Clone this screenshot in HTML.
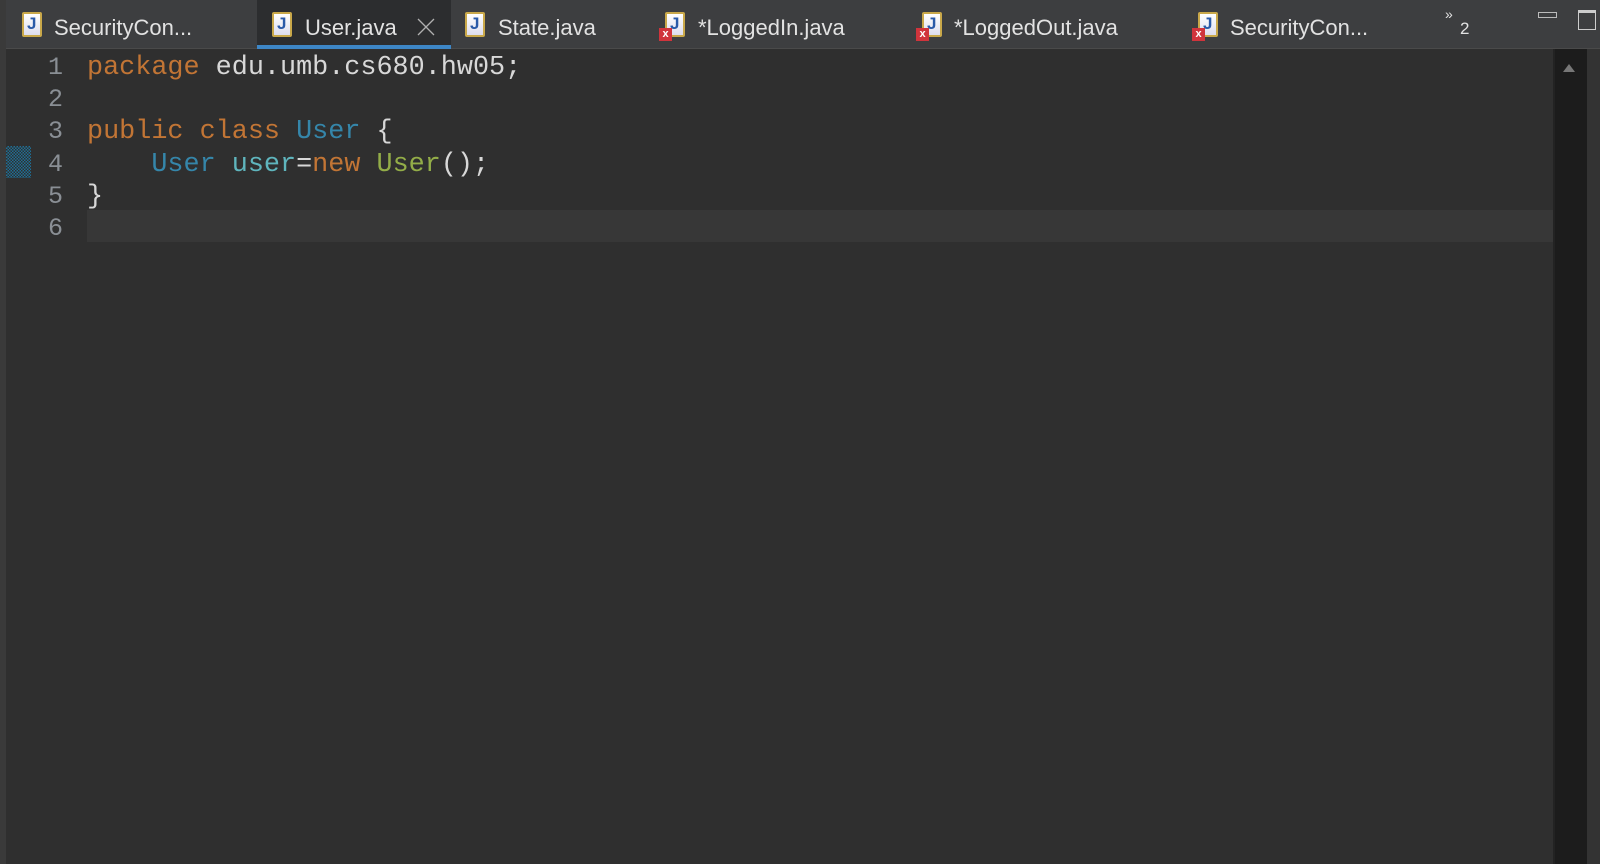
<!DOCTYPE html>
<html><head><meta charset="utf-8"><style>
*{margin:0;padding:0;box-sizing:border-box}
body{width:1600px;height:864px;background:#2f2f2f;overflow:hidden;position:relative;font-family:"Liberation Sans",sans-serif}
.bar{position:absolute;left:0;top:0;width:1600px;height:49px;background:#3d3e40;border-bottom:1px solid #4a4a4a}
.lb{position:absolute;left:0;top:0;width:6px;height:864px;background:#3a3a3a}
.tab{position:absolute;top:0;height:49px;color:#e2e2e2;font-size:22px;line-height:56px;white-space:nowrap}
.act{position:absolute;left:257px;top:0;width:194px;height:49px;background:#2c2d2f;border-bottom:4px solid #3d86c6}
.ic{position:absolute;top:12px;width:20px;height:25px;background:linear-gradient(#fff,#dde);border:2px solid #c9a84a;border-radius:2px}
.ic:after{content:"J";position:absolute;left:3px;top:-1px;font:bold 17px/22px "Liberation Sans";color:#2a5aa8}
.er{position:absolute;top:28px;width:13px;height:13px;background:#d0343c;color:#fff;font:bold 11px/13px "Liberation Sans";text-align:center}
.code{position:absolute;left:87px;top:52px;font-family:"Liberation Mono","Courier New",monospace;font-size:26.8px;line-height:32.2px;color:#d8d8d8;white-space:pre}
.num{position:absolute;left:30px;top:52px;width:33px;text-align:right;font-family:"Liberation Mono",monospace;font-size:25px;line-height:32.2px;color:#8a8f95;white-space:pre}
.k{color:#c27535}.t{color:#3586aa}.v{color:#5fb5bd}.g{color:#93ad48}
</style></head><body>
<div class="bar"></div>
<div class="act"></div>
<div class="ic" style="left:22px"></div><div class="tab" style="left:54px">SecurityCon...</div>
<div class="ic" style="left:272px"></div><div class="tab" style="left:305px">User.java</div>
<svg style="position:absolute;left:417px;top:18px" width="18" height="18"><path d="M1 1L17 17M17 1L1 17" stroke="#b0b0b0" stroke-width="1.3"/></svg>
<div class="ic" style="left:465px"></div><div class="tab" style="left:498px">State.java</div>
<div class="ic" style="left:665px"></div><div class="er" style="left:659px">x</div><div class="tab" style="left:698px">*LoggedIn.java</div>
<div class="ic" style="left:922px"></div><div class="er" style="left:916px">x</div><div class="tab" style="left:954px">*LoggedOut.java</div>
<div class="ic" style="left:1198px"></div><div class="er" style="left:1192px">x</div><div class="tab" style="left:1230px">SecurityCon...</div>
<div class="tab" style="left:1445px;font-size:14px;line-height:28px">»</div>
<div class="tab" style="left:1460px;font-size:17px;line-height:58px">2</div>
<div style="position:absolute;left:1538px;top:12px;width:19px;height:6px;border:1px solid #bbb"></div>
<div style="position:absolute;left:1578px;top:10px;width:18px;height:20px;border:1px solid #ccc;border-top-width:3px"></div>
<div class="lb"></div>
<div style="position:absolute;left:87px;top:210px;width:1466px;height:32px;background:#373737"></div>
<div style="position:absolute;left:6px;top:146px;width:25px;height:32px;background:repeating-conic-gradient(#1f6f96 0 25%,#2f2f2f 0 50%) 0 0/3px 3px"></div>
<div style="position:absolute;left:1553px;top:49px;width:34px;height:815px;background:#1c1c1c;border-left:2px solid #232323"></div>
<div style="position:absolute;left:1563px;top:64px;border:6px solid transparent;border-bottom:8px solid #777;border-top:0"></div>
<div style="position:absolute;left:1587px;top:49px;width:13px;height:815px;background:#333"></div>
<div class="num">1
2
3
4
5
6</div>
<div class="code"><span class="k">package</span> edu.umb.cs680.hw05;

<span class="k">public</span> <span class="k">class</span> <span class="t">User</span> {
    <span class="t">User</span> <span class="v">user</span>=<span class="k">new</span> <span class="g">User</span>();
}
</div>
</body></html>
